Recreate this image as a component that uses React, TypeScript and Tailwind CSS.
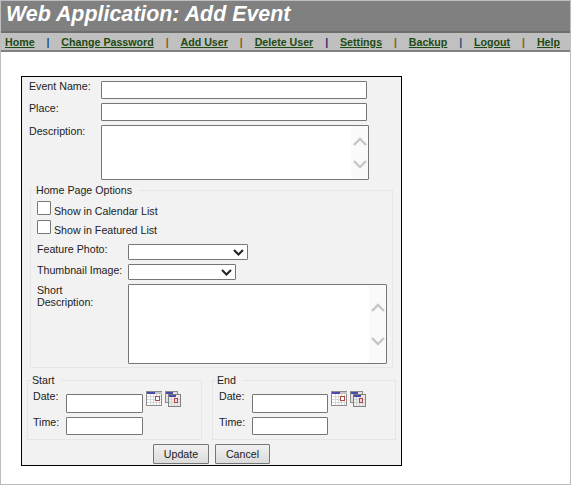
import React from "react";

const links = [
  { label: "Home", sep: "text-[#1f4f7a]" },
  { label: "Change Password", sep: "text-[#8a5a10]" },
  { label: "Add User", sep: "text-[#8a5a10]" },
  { label: "Delete User", sep: "text-[#3b1f6e]" },
  { label: "Settings", sep: "text-[#8a5a10]" },
  { label: "Backup", sep: "text-[#1f4f7a]" },
  { label: "Logout", sep: "text-[#8a5a10]" },
  { label: "Help", sep: "" },
];

const inputClass = "block bg-white border border-[#767676] rounded-[1px] h-[18px]";

const Chevrons = ({ gap }: { gap: string }) => (
  <div className={`absolute right-0 top-0 bottom-0 w-[17px] bg-[#fafafa] pt-[1px] flex flex-col justify-center items-center ${gap}`}>
    <svg width="14" height="9" viewBox="0 0 14 9" fill="none" stroke="#c6c6c6" strokeWidth="2.4">
      <path d="M1 8l6-6 6 6" />
    </svg>
    <svg width="14" height="9" viewBox="0 0 14 9" fill="none" stroke="#c6c6c6" strokeWidth="2.4">
      <path d="M1 1l6 6 6-6" />
    </svg>
  </div>
);

const Select = ({ width }: { width: string }) => (
  <div className={`relative bg-white border border-[#767676] rounded-[1px] h-[16px] ${width}`}>
    <svg className="absolute right-[3px] top-[4px]" width="11" height="7" viewBox="0 0 11 7" fill="none" stroke="#222" strokeWidth="2">
      <path d="M1 1l4.5 4.5L10 1" />
    </svg>
  </div>
);

const CalendarIcon = () => (
  <svg width="16" height="15" viewBox="0 0 16 15" shapeRendering="crispEdges">
    <rect x="0" y="0" width="16" height="15" fill="#8c8c8c" />
    <rect x="1" y="1" width="15" height="2" fill="#c4c4c4" />
    <rect x="1" y="1" width="8" height="2" fill="#4a4aa8" />
    <rect x="1" y="3" width="14" height="11" fill="#fff" />
    <path d="M4.5 3v11M7.5 3v11M10.5 3v11M13.5 3v11M1 5.5h14M1 8.5h14M1 11.5h14" stroke="#d8d8d8" strokeWidth="1" />
    <rect x="9.5" y="5.5" width="4" height="4" fill="#fff" stroke="#b04a4a" />
  </svg>
);

const CalendarStackIcon = () => (
  <svg width="16" height="16" viewBox="0 0 16 16" shapeRendering="crispEdges">
    <rect x="0.5" y="0.5" width="12" height="11" fill="#e2e2e2" stroke="#8c8c8c" />
    <rect x="1" y="1" width="7" height="2" fill="#4a4aa8" />
    <rect x="3" y="3" width="13" height="13" fill="#808080" />
    <rect x="4" y="4" width="11" height="11" fill="#ececec" />
    <rect x="4" y="4" width="7" height="2" fill="#4a4aa8" />
    <path d="M6.5 6v9M9.5 6v9M12.5 6v9M4 8.5h11M4 11.5h11" stroke="#d4d4d4" strokeWidth="1" />
    <rect x="9.5" y="7.5" width="3" height="4" fill="#e4dcdc" stroke="#b04a4a" />
  </svg>
);

const DateTimeGroup = ({ title, width, marginLeft, pad, legendShift, inputWidth }: { title: string; width: string; marginLeft: string; pad: string; legendShift: string; inputWidth: string }) => (
  <fieldset className={`border border-[#e6e6e6] pr-0 pb-[3px] pt-0 h-[66px] ${pad} ${width} ${marginLeft}`}>
    <legend className={`pr-[6px] leading-[13px] ${legendShift}`}>{title}</legend>
    <div className="flex mt-[4px]">
      <span className="w-[33px] mt-[-2px] leading-[14px]">Date:</span>
      <div className={`h-[19px] mt-[3px] bg-white border border-[#767676] rounded-[1px] ${inputWidth}`} />
      <div className="flex ml-[3px] gap-[3px] items-start">
        <CalendarIcon />
        <CalendarStackIcon />
      </div>
    </div>
    <div className="flex mt-[4px]">
      <span className="w-[33px] mt-[-2px] leading-[14px]">Time:</span>
      <div className={`h-[18px] bg-white border border-[#767676] rounded-[1px] ${inputWidth}`} />
    </div>
  </fieldset>
);

const App: React.FC = () => {
  return (
    <div className="w-[571px] h-[485px] bg-white border border-[#bdbdbd] overflow-hidden font-['Liberation_Sans',Arial,sans-serif] text-[10.67px] text-[#222]">
      {/* Title bar */}
      <div className="h-[32px] bg-[#808080] border-b-2 border-[#6e6e6e] pl-[5px] text-white italic font-bold text-[21.4px] leading-[27px]">
        Web Application: Add Event
      </div>

      {/* Nav */}
      <div className="h-[19px] bg-[#c0c0c0] border-b-2 border-[#808080] flex items-center pl-[4px] pr-[10px] font-bold">
        {links.map((link, i) => (
          <React.Fragment key={link.label}>
            <a className="underline text-[#1e4a12] whitespace-nowrap">{link.label}</a>
            {i < links.length - 1 && (
              <span className={`flex-1 text-center ${link.sep}`}>|</span>
            )}
          </React.Fragment>
        ))}
      </div>

      {/* Form */}
      <div className="ml-[20px] mt-[24px] w-[381px] h-[390px] bg-[#f2f2f2] border border-black pt-[4px] pl-[1px]">
        <div className="flex h-[22px] pl-[6px]">
          <span className="w-[72px] mt-[-2px] leading-[14px]">Event Name:</span>
          <div className={`${inputClass} w-[266px]`} />
        </div>
        <div className="flex h-[22px] pl-[6px]">
          <span className="w-[72px] mt-[-2px] leading-[14px]">Place:</span>
          <div className={`${inputClass} w-[266px]`} />
        </div>
        <div className="flex pl-[6px]">
          <span className="w-[72px] mt-[-1px] leading-[14px]">Description:</span>
          <div className="relative w-[268px] h-[55px] bg-white border border-[#767676] rounded-[1px]">
            <Chevrons gap="gap-[14px]" />
          </div>
        </div>

        {/* Home page options */}
        <fieldset className="border border-[#e6e6e6] ml-[7px] w-[363px] h-[185px] mt-[3px] pl-[6px] pr-[5px] pt-0">
          <legend className="ml-[-1px] leading-[14px] pr-[6px]">Home Page Options</legend>
          <div className="flex items-center h-[19px] mt-[4px]">
            <div className="w-[14px] h-[14px] bg-white border border-[#767676] rounded-[1px] mb-[5px]" />
            <span className="ml-[3px] mt-[1px]">Show in Calendar List</span>
          </div>
          <div className="flex items-center h-[19px]">
            <div className="w-[14px] h-[14px] bg-white border border-[#767676] rounded-[1px] mb-[5px]" />
            <span className="ml-[3px] mt-[1px]">Show in Featured List</span>
          </div>
          <div className="flex h-[20px] mt-[5px]">
            <span className="w-[91px] mt-[-2px] leading-[14px]">Feature Photo:</span>
            <Select width="w-[120px]" />
          </div>
          <div className="flex h-[20px]">
            <span className="w-[91px] mt-[-1px] leading-[14px]">Thumbnail Image:</span>
            <Select width="w-[108px]" />
          </div>
          <div className="flex">
            <span className="w-[91px] leading-[12px]">
              Short
              <br />
              Description:
            </span>
            <div className="relative w-[259px] h-[80px] bg-white border border-[#767676] rounded-[1px]">
              <Chevrons gap="gap-[25px]" />
            </div>
          </div>
        </fieldset>

        {/* Start / End */}
        <div className="flex mt-[6px]">
          <DateTimeGroup title="Start" width="w-[175px]" marginLeft="ml-[4px]" pad="pl-[5px]" legendShift="ml-[-1px]" inputWidth="w-[77px]" />
          <DateTimeGroup title="End" width="w-[184px]" marginLeft="ml-[10px]" pad="pl-[6px]" legendShift="ml-[-2px]" inputWidth="w-[76px]" />
        </div>

        {/* Buttons */}
        <div className="flex mt-[4px] ml-[130px] gap-[6px]">
          <button className="w-[56px] h-[20px] border border-[#767676] rounded-[1px] bg-gradient-to-b from-[#f0f0f0] to-[#dcdcdc]">
            Update
          </button>
          <button className="w-[55px] h-[20px] border border-[#767676] rounded-[1px] bg-gradient-to-b from-[#f0f0f0] to-[#dcdcdc]">
            Cancel
          </button>
        </div>
      </div>
    </div>
  );
};

export default App;
